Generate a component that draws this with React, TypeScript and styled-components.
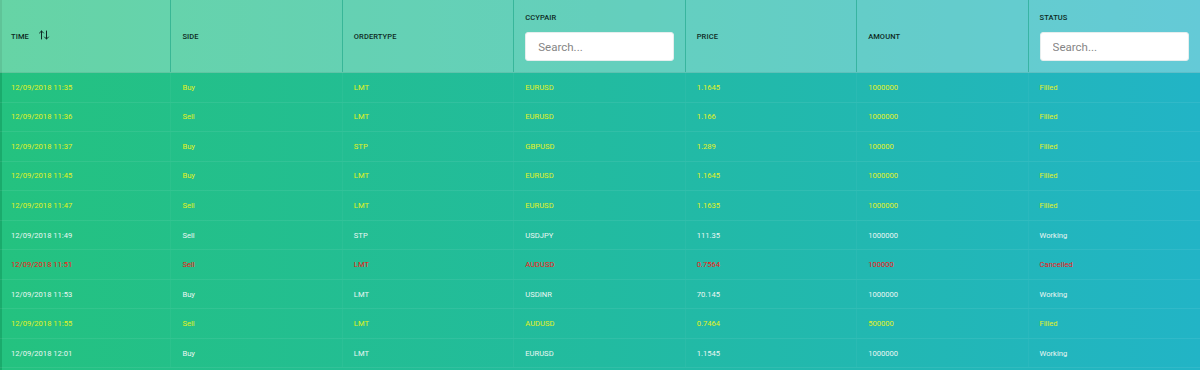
import styled, { createGlobalStyle } from 'styled-components';
import { ArrowUpDown } from 'lucide-react';

const GlobalStyle = createGlobalStyle`
    html, body {
        margin: 0;
        padding: 0;
    }

    body {
        font-family: Roboto, "Liberation Sans", sans-serif;
        background: #22b8b0;
    }
`;

type Status = 'Filled' | 'Working' | 'Cancelled';

interface Order {
    time: string;
    side: string;
    type: string;
    pair: string;
    price: string;
    amount: string;
    status: Status;
}

const orders: Order[] = [
    { time: '12/09/2018 11:35', side: 'Buy', type: 'LMT', pair: 'EURUSD', price: '1.1645', amount: '1000000', status: 'Filled' },
    { time: '12/09/2018 11:36', side: 'Sell', type: 'LMT', pair: 'EURUSD', price: '1.166', amount: '1000000', status: 'Filled' },
    { time: '12/09/2018 11:37', side: 'Buy', type: 'STP', pair: 'GBPUSD', price: '1.289', amount: '100000', status: 'Filled' },
    { time: '12/09/2018 11:45', side: 'Buy', type: 'LMT', pair: 'EURUSD', price: '1.1645', amount: '1000000', status: 'Filled' },
    { time: '12/09/2018 11:47', side: 'Sell', type: 'LMT', pair: 'EURUSD', price: '1.1635', amount: '1000000', status: 'Filled' },
    { time: '12/09/2018 11:49', side: 'Sell', type: 'STP', pair: 'USDJPY', price: '111.35', amount: '1000000', status: 'Working' },
    { time: '12/09/2018 11:51', side: 'Sell', type: 'LMT', pair: 'AUDUSD', price: '0.7564', amount: '100000', status: 'Cancelled' },
    { time: '12/09/2018 11:53', side: 'Buy', type: 'LMT', pair: 'USDINR', price: '70.145', amount: '1000000', status: 'Working' },
    { time: '12/09/2018 11:55', side: 'Sell', type: 'LMT', pair: 'AUDUSD', price: '0.7464', amount: '500000', status: 'Filled' },
    { time: '12/09/2018 12:01', side: 'Buy', type: 'LMT', pair: 'EURUSD', price: '1.1545', amount: '1000000', status: 'Working' },
];

const statusColor: Record<Status, string> = {
    Filled: '#e2f21e',
    Working: '#eaf7f3',
    Cancelled: '#f51414',
};

// left edge line sits over the cells, it doesn't shift the columns
const Table = styled.div`
    width: 1200px;
    height: 370px;
    overflow: hidden;
    background: linear-gradient(90deg, #24c27f 0%, #22bba0 50%, #22b4c6 100%);
    box-shadow: inset 2px 0 0 #1aab6c;
`;

const HeaderRow = styled.div`
    display: grid;
    grid-template-columns: repeat(7, 1fr);
    height: 73px;
    background: rgba(255, 255, 255, 0.3);
    border-bottom: 1px solid rgba(0, 0, 0, 0.06);
    box-sizing: border-box;
`;

const HeaderCell = styled.div`
    display: flex;
    flex-direction: column;
    justify-content: center;
    gap: 9px;
    padding: 2px 11px 0 11px;
    border-right: 1px solid rgba(20, 160, 130, 0.55);
    box-sizing: border-box;

    &:last-child {
        border-right: none;
    }
`;

const Label = styled.div`
    display: flex;
    align-items: center;
    gap: 9px;
    font-size: 7.5px;
    font-weight: 500;
    line-height: 10px;
    color: #0e2b24;
    letter-spacing: 0.1px;
`;

const SortIcon = styled(ArrowUpDown)`
    width: 12px;
    height: 12px;
    color: #0e2b24;
    margin-top: -4px;
`;

const Search = styled.input`
    width: 100%;
    height: 29px;
    box-sizing: border-box;
    border: 1px solid #e6eeee;
    border-radius: 3px;
    background: #ffffff;
    padding: 0 12px;
    font-family: Roboto, "Liberation Sans", sans-serif;
    font-size: 11.5px;
    color: #333;
    outline: none;

    &::placeholder {
        color: #858585;
    }
`;

const BodyRow = styled.div<{ $color: string }>`
    display: grid;
    grid-template-columns: repeat(7, 1fr);
    height: 29.55px;
    align-items: center;
    border-bottom: 1px solid rgba(255, 255, 255, 0.07);
    box-sizing: border-box;
    color: ${(p) => p.$color};
    font-size: 7.6px;
`;

const Cell = styled.div`
    height: 100%;
    display: flex;
    align-items: center;
    padding: 0 10px 0 11px;
    border-right: 1px solid rgba(255, 255, 255, 0.04);
    box-sizing: border-box;
    white-space: nowrap;

    &:last-child {
        border-right: none;
    }
`;

const columns: { key: keyof Order; title: string; filter?: boolean; sort?: boolean }[] = [
    { key: 'time', title: 'TIME', sort: true },
    { key: 'side', title: 'SIDE' },
    { key: 'type', title: 'ORDERTYPE' },
    { key: 'pair', title: 'CCYPAIR', filter: true },
    { key: 'price', title: 'PRICE' },
    { key: 'amount', title: 'AMOUNT' },
    { key: 'status', title: 'STATUS', filter: true },
];

const App = () => {
    return (
        <>
            <GlobalStyle />
            <Table>
                <HeaderRow>
                    {columns.map((c) => (
                        <HeaderCell key={c.key}>
                            <Label>
                                {c.title}
                                {c.sort && <SortIcon strokeWidth={2} />}
                            </Label>
                            {c.filter && <Search placeholder="Search..." />}
                        </HeaderCell>
                    ))}
                </HeaderRow>
                {orders.map((o) => (
                    <BodyRow key={o.time} $color={statusColor[o.status]}>
                        {columns.map((c) => (
                            <Cell key={c.key}>{o[c.key]}</Cell>
                        ))}
                    </BodyRow>
                ))}
            </Table>
        </>
    );
};

export default App;
